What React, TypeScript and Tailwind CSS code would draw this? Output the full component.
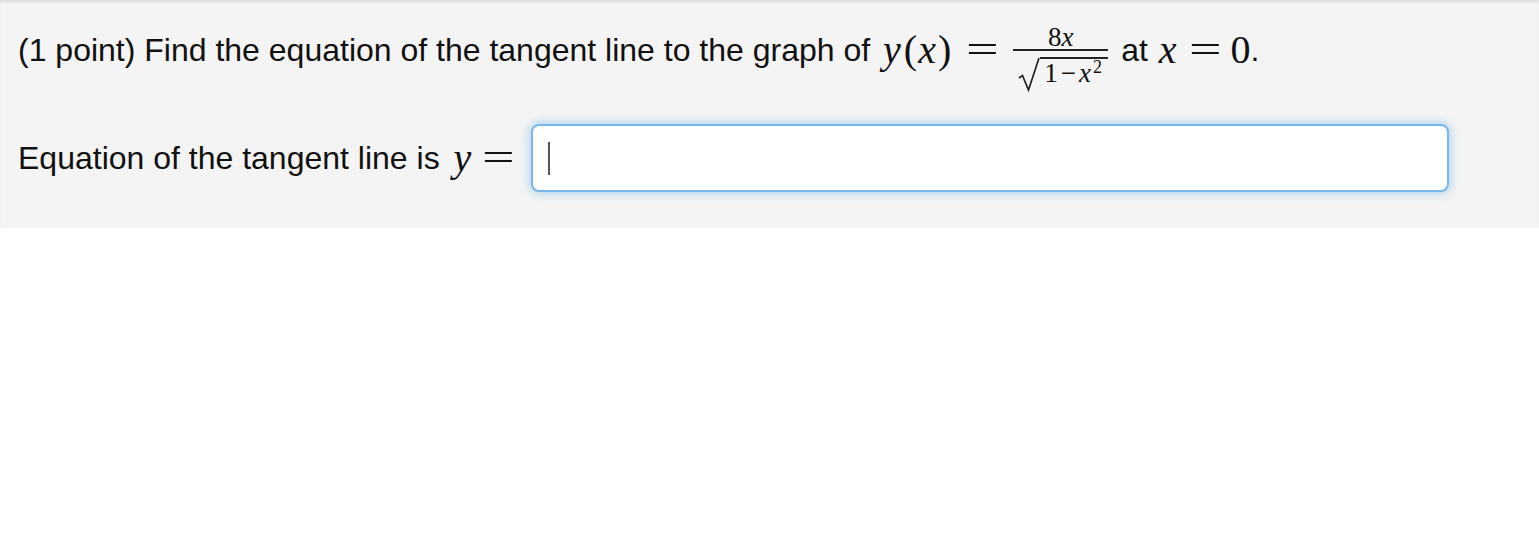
function Eq({ className = "" }: { className?: string }) {
  return (
    <span className={`inline-block w-[30px] text-center ${className}`}>
      <span className="inline-block scale-x-[1.45]">=</span>
    </span>
  );
}

export default function App() {
  const serif = "font-['Liberation_Serif',serif]";
  return (
    <div className="min-h-[540px] bg-white">
      <div className="h-[228px] bg-[#f4f4f4] shadow-[inset_0_3px_3px_-1px_rgba(0,0,0,0.1)] px-[18px] font-['Liberation_Sans',Arial,sans-serif] text-[32px] text-[#111]">
        {/* question line */}
        <div className="h-[100px] flex items-center whitespace-nowrap">
          <span>(1 point) Find the equation of the tangent line to the graph of&nbsp;</span>
          <span className={`${serif} text-[40px] flex items-center`}>
            <i className="ml-[4px]">y</i>
            <span className="ml-[3px]">(</span>
            <i className="ml-[1px]">x</i>
            <span className="ml-[2px]">)</span>
            <Eq className="ml-[16px]" />
            {/* fraction */}
            <span className="ml-[16px] inline-flex flex-col w-[95px] text-[#111]">
              <span className="h-[42px] flex items-end justify-center">
                <span className="text-[27px] leading-[24px]">
                  8<i>x</i>
                </span>
              </span>
              <span className="h-[2px] bg-[#222]" />
              <span className="h-[42px] flex items-start pl-[5px]">
                <svg width="22" height="35" viewBox="0 0 22 35" className="mt-[6px]">
                  <path d="M1 21 L4.5 18.5 L10.5 33 L21 1" fill="none" stroke="#222" strokeWidth="1.7" strokeLinejoin="miter" />
                </svg>
                <span className="mt-[6px] border-t-2 border-[#222] flex-1 text-[27px] leading-[26px] pt-[1px] pl-[4px] whitespace-nowrap">
                  1<span className="mx-[3px]">−</span><i>x</i>
                  <span className="relative -top-[9px] text-[18px] ml-[2px]">2</span>
                </span>
              </span>
            </span>
          </span>
          <span className="ml-[13px]">at&nbsp;</span>
          <span className={`${serif} text-[40px] flex items-center`}>
            <i className="ml-[2px]">x</i>
            <Eq className="ml-[14px]" />
            <span className="ml-[10px]">0</span>
          </span>
          <span>.</span>
        </div>

        {/* answer line */}
        <div className="flex items-center mt-[24px] whitespace-nowrap">
          <span>Equation of the tangent line is&nbsp;</span>
          <span className={`${serif} text-[40px] flex items-center`}>
            <i className="ml-[5px]">y</i>
            <Eq className="ml-[12px]" />
          </span>
          <div className="ml-[18px] w-[918px] h-[68px] bg-white rounded-[8px] border-2 border-[#78b6ee] shadow-[0_0_10px_2px_rgba(102,175,233,0.45)] flex items-center pl-[15px]">
            <span className="w-[2px] h-[33px] bg-[#555]" />
          </div>
        </div>
      </div>
    </div>
  );
}
